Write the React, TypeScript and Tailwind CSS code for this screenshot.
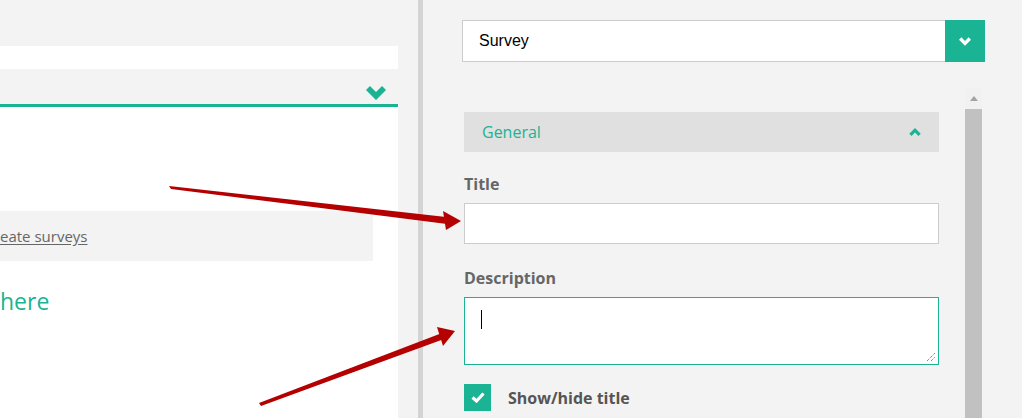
const teal = 'text-[#1ab394]'

function ChevronDown({ className }: { className?: string }) {
  return (
    <svg viewBox="0 0 20 14" className={className} fill="currentColor">
      <path d="M0 4 L4 0 L10 6 L16 0 L20 4 L10 14 Z" />
    </svg>
  )
}

function ChevronUp({ className }: { className?: string }) {
  return (
    <svg viewBox="0 0 20 14" className={className} fill="currentColor">
      <path d="M0 10 L4 14 L10 8 L16 14 L20 10 L10 0 Z" />
    </svg>
  )
}

function Arrows() {
  return (
    <svg className="pointer-events-none absolute left-0 top-0" width="1022" height="418" viewBox="0 0 1022 418">
      {/* upper arrow */}
      <polygon points="169,186 171,189 447,224 446,217" fill="#b40000" />
      <polygon points="443,211 461,221 446,230" fill="#b40000" />
      {/* lower arrow */}
      <polygon points="259,403 261,406 444,339 442,333" fill="#b40000" />
      <polygon points="437,327 455,331 443,346" fill="#b40000" />
    </svg>
  )
}

export default function App() {
  return (
    <div className="relative flex h-[418px] w-[1022px] overflow-hidden bg-[#f3f3f3] font-['Open_Sans',sans-serif]">
      {/* editor side */}
      <div className="flex w-[418px] shrink-0 flex-col pr-[20px] pt-[46px]">
        <div className="h-[23px] bg-white" />
        <div className="flex h-[38px] items-start justify-end border-b-[3px] border-[#1ab394] bg-[#f3f3f3] pr-[12px] pt-[17px]">
          <ChevronDown className={`h-[14px] w-[20px] ${teal}`} />
        </div>
        <div className="flex-1 bg-white pt-[104px]">
          <div className="flex h-[50px] w-[373px] items-center bg-[#f3f3f3]">
            <span className="text-[15px] text-[#666] underline underline-offset-2">eate surveys</span>
          </div>
          <div className={`mt-[25px] text-[23px] leading-[30px] ${teal}`}>here</div>
        </div>
      </div>

      <div className="w-[5px] shrink-0 bg-[#d4d4d4]" />

      {/* properties side */}
      <div className="flex flex-1 flex-col pl-[39px] pr-[37px] pt-[20px]">
        <div className="flex h-[42px] border border-[#cccccc] bg-white">
          <div className="flex flex-1 items-center pl-[16px] font-['Liberation_Sans',sans-serif] text-[16px] text-black">
            Survey
          </div>
          <div className="-my-px -mr-px flex w-[40px] items-center justify-center bg-[#1ab394]">
            <ChevronDown className="h-[9px] w-[12px] text-white" />
          </div>
        </div>

        <div className="mr-[3px] mt-[26px] flex flex-1">
          <div className="ml-[2px] w-[475px] pt-[24px]">
            <div className="flex h-[40px] items-center justify-between bg-[#e0e0e0] pl-[18px] pr-[18px]">
              <span className={`text-[16px] ${teal}`}>General</span>
              <ChevronUp className={`h-[8px] w-[12px] ${teal}`} />
            </div>

            <div className="mt-[20px] h-[24px] text-[16px] font-bold leading-[24px] text-[#666]">Title</div>
            <div className="mt-[7px] h-[41px] border border-[#cccccc] bg-white" />

            <div className="mt-[22px] h-[24px] text-[16px] font-bold leading-[24px] text-[#666]">Description</div>
            <div className="relative mt-[7px] h-[68px] border border-[#1ab394] bg-white">
              <div className="ml-[16px] mt-[12px] h-[19px] w-px bg-black" />
              <svg className="absolute bottom-[2px] right-[2px]" width="10" height="10" viewBox="0 0 10 10">
                <path d="M1 9 L9 1 M5 9 L9 5" stroke="#555" strokeWidth="1" strokeDasharray="1 1" />
              </svg>
            </div>

            <div className="mt-[19px] flex items-center gap-[17px]">
              <div className="flex h-[27px] w-[27px] items-center justify-center bg-[#1ab394]">
                <svg width="14" height="11" viewBox="0 0 14 11">
                  <path d="M1.5 5.5 L5.5 9 L12.5 1.5" stroke="white" strokeWidth="3.2" fill="none" />
                </svg>
              </div>
              <span className="text-[16px] font-bold text-[#555]">Show/hide title</span>
            </div>
          </div>

          <div className="ml-auto flex w-[17px] flex-col">
            <div className="flex h-[21px] items-center justify-center bg-[#f1f1f1]">
              <div className="h-0 w-0 border-x-[4px] border-b-[5px] border-x-transparent border-b-[#a3a3a3]" />
            </div>
            <div className="flex-1 bg-[#c1c1c1]" />
          </div>
        </div>
      </div>

      <Arrows />
    </div>
  )
}
